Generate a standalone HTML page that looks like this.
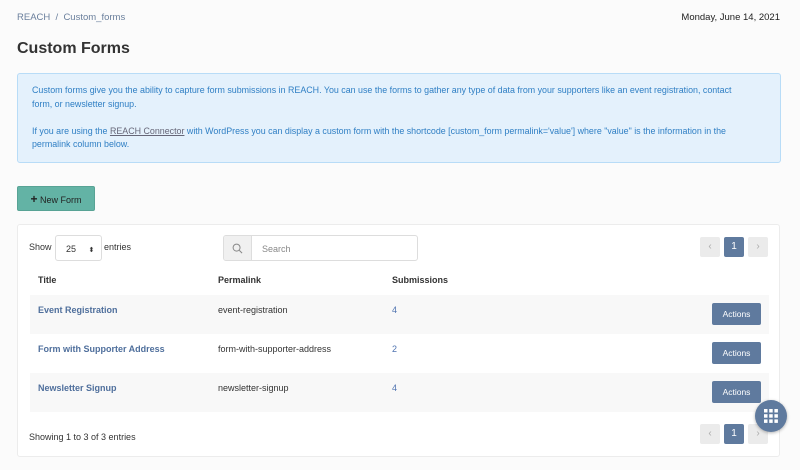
<!DOCTYPE html>
<html><head><meta charset="utf-8"><style>
*{box-sizing:border-box;margin:0;padding:0}
body{width:800px;height:470px;background:#fbfbfb;font-family:"Liberation Sans",sans-serif;color:#333;position:relative;overflow:hidden;font-size:9px}
.a{position:absolute}
.crumb{left:17px;top:12px;font-size:9.5px;color:#6a7f9c}
.date{right:20px;top:12px;font-size:9.5px;color:#222}
h1{position:absolute;left:17px;top:40px;font-size:16px;font-weight:bold;color:#333}
.info{left:17px;top:73px;width:764px;height:90px;background:#e4f1fc;border:1px solid #b8dcf7;border-radius:3px;color:#2f7fc4;font-size:8.9px;line-height:13.5px;padding:10px 30px 10px 14px}
.info u{color:#667}
.btn{left:17px;top:186px;width:78px;height:25px;background:#63b3a5;border:1px solid #58a395;border-radius:2px;font-size:9px;color:#222;text-align:center;line-height:24px}
.card{left:17px;top:224px;width:763px;height:233px;background:#fff;border:1px solid #ececec;border-radius:3px}
.pg{width:20px;height:20px;border-radius:2px;background:#ebebeb;color:#aaa;text-align:center;line-height:20px;font-size:10px}
.pg.on{background:#5f7a9e;color:#fff}
.row{left:12px;width:739px;height:39px}
.row span{position:absolute;top:10px}
.t{left:8px;color:#4f6f9c;font-weight:bold}
.p{left:188px;color:#333}
.s{left:362px;color:#4f73b0}
.act{position:absolute;right:8px;top:8px;width:49px;height:22px;background:#5f7a9e;border-radius:2px;color:#fff;text-align:center;line-height:22px;font-size:8.5px}
</style></head><body>
<div class="a crumb">REACH &nbsp;/&nbsp; Custom_forms</div>
<div class="a date">Monday, June 14, 2021</div>
<h1>Custom Forms</h1>
<div class="a info">Custom forms give you the ability to capture form submissions in REACH. You can use the forms to gather any type of data from your supporters like an event registration, contact form, or newsletter signup.<br><br>If you are using the <u>REACH Connector</u> with WordPress you can display a custom form with the shortcode [custom_form permalink='value'] where "value" is the information in the permalink column below.</div>
<div class="a btn"><b style="font-size:12px">+</b> New Form</div>
<div class="a card">
 <div class="a" style="left:11px;top:17px">Show</div>
 <div class="a" style="left:37px;top:10px;width:47px;height:26px;border:1px solid #ddd;border-radius:3px;padding:8px 0 0 10px">25 <span style="margin-left:10px;font-size:7px">⬍</span></div>
 <div class="a" style="left:86px;top:17px">entries</div>
 <div class="a" style="left:205px;top:10px;width:195px;height:26px;border:1px solid #ddd;border-radius:3px;overflow:hidden">
  <div class="a" style="left:0;top:0;width:28px;height:26px;background:#f0f0f0;border-right:1px solid #ddd;color:#888;text-align:center;line-height:24px">
   <svg width="11" height="11" viewBox="0 0 12 12" style="margin-top:7px"><circle cx="5" cy="5" r="3.8" fill="none" stroke="#888" stroke-width="1.1"/><path d="M8 8l3 3" stroke="#888" stroke-width="1.1"/></svg></div>
  <div class="a" style="left:38px;top:8px;color:#888">Search</div>
 </div>
 <div class="a pg" style="left:682px;top:12px">‹</div>
 <div class="a pg on" style="left:706px;top:12px">1</div>
 <div class="a pg" style="left:730px;top:12px">›</div>
 <div class="a" style="left:20px;top:50px;font-weight:bold">Title</div>
 <div class="a" style="left:200px;top:50px;font-weight:bold">Permalink</div>
 <div class="a" style="left:374px;top:50px;font-weight:bold">Submissions</div>
 <div class="a row" style="top:70px;background:#f8f8f8"><span class="t">Event Registration</span><span class="p">event-registration</span><span class="s">4</span><div class="act">Actions</div></div>
 <div class="a row" style="top:109px"><span class="t">Form with Supporter Address</span><span class="p">form-with-supporter-address</span><span class="s">2</span><div class="act">Actions</div></div>
 <div class="a row" style="top:148px;background:#f8f8f8"><span class="t">Newsletter Signup</span><span class="p">newsletter-signup</span><span class="s">4</span><div class="act">Actions</div></div>
 <div class="a" style="left:11px;top:207px">Showing 1 to 3 of 3 entries</div>
 <div class="a pg" style="left:682px;top:199px">‹</div>
 <div class="a pg on" style="left:706px;top:199px">1</div>
 <div class="a pg" style="left:730px;top:199px">›</div>
</div>
<div class="a" style="left:755px;top:400px;width:32px;height:32px;border-radius:50%;background:#5f7a9e;box-shadow:0 1px 3px rgba(0,0,0,.3)">
 <svg width="32" height="32" viewBox="0 0 32 32"><g fill="#fff"><rect x="9" y="9" width="3.5" height="3.5"/><rect x="14.2" y="9" width="3.5" height="3.5"/><rect x="19.4" y="9" width="3.5" height="3.5"/><rect x="9" y="14.2" width="3.5" height="3.5"/><rect x="14.2" y="14.2" width="3.5" height="3.5"/><rect x="19.4" y="14.2" width="3.5" height="3.5"/><rect x="9" y="19.4" width="3.5" height="3.5"/><rect x="14.2" y="19.4" width="3.5" height="3.5"/><rect x="19.4" y="19.4" width="3.5" height="3.5"/></g></svg>
</div>
</body></html>
